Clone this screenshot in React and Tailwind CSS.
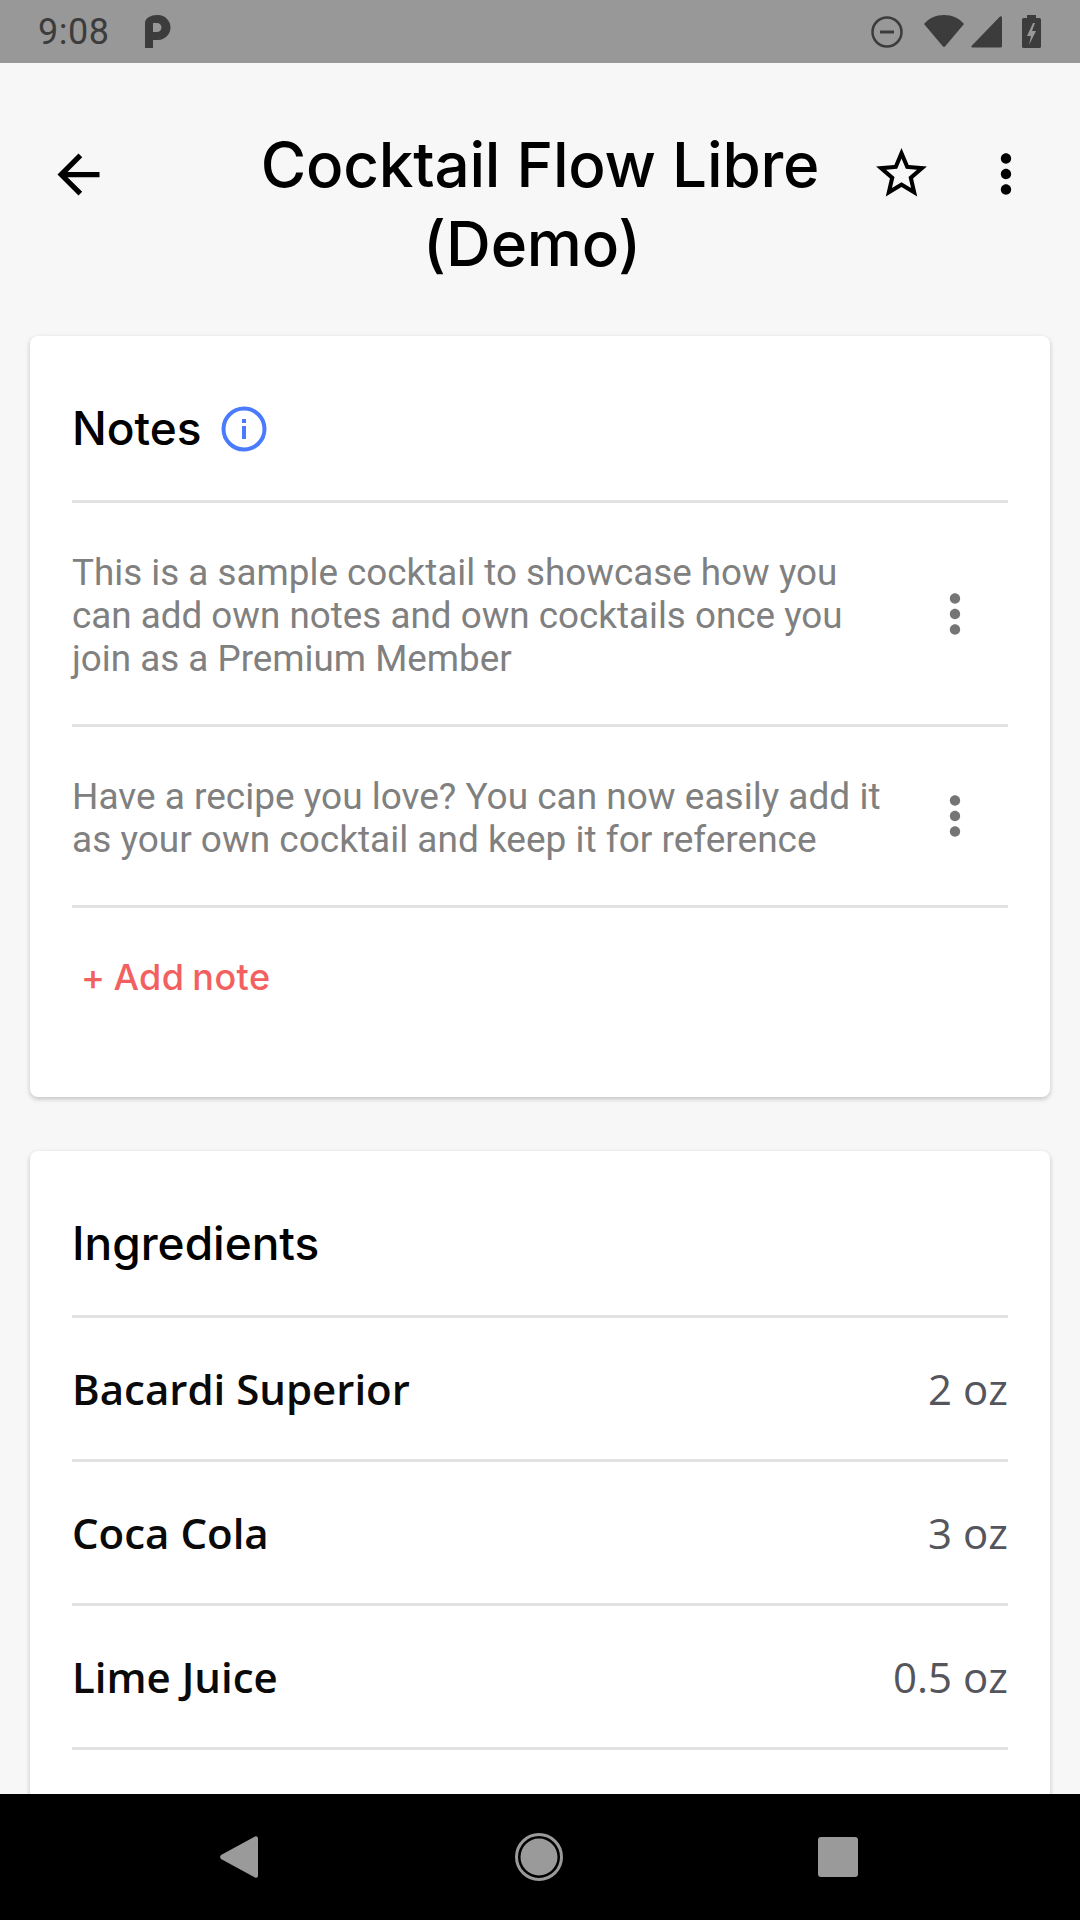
import React from 'react'

const DOTS = 'M12 8c1.1 0 2-.9 2-2s-.9-2-2-2-2 .9-2 2 .9 2 2 2zm0 2c-1.1 0-2 .9-2 2s.9 2 2 2 2-.9 2-2-.9-2-2-2zm0 6c-1.1 0-2 .9-2 2s.9 2 2 2 2-.9 2-2-.9-2-2-2z'

function MoreVert({ fill }) {
  return (
    <svg width="62" height="62" viewBox="0 0 24 24" fill={fill} className="shrink-0">
      <path d={DOTS} />
    </svg>
  )
}

function StatusBar() {
  return (
    <div className="h-[63px] shrink-0 bg-[#989898] flex items-center text-[#3c3c3c]">
      <span className="ml-[38px] pt-[2px] w-[107px] text-[36px] leading-[63px] font-['Roboto',sans-serif] tracking-[0.5px]">9:08</span>
      <svg width="26" height="33" viewBox="0 0 26 33" fill="currentColor">
        <path d="M0 8a12 8 0 0 1 12-8h1a12.500 12.500 0 0 1 0 25H8v8H0zM8 8v9h4a4.500 4.500 0 0 0 0-9z" fillRule="evenodd" />
      </svg>
      <div className="flex-1" />
      <svg width="32" height="32" viewBox="0 0 32 32" fill="none" stroke="currentColor" strokeWidth="2.500">
        <circle cx="16" cy="16" r="14.500" />
        <path d="M9 16h14" strokeWidth="3" />
      </svg>
      <svg className="ml-[20px]" width="42" height="33" viewBox="0 0 42 33" fill="currentColor">
        <path d="M1 9C6 3 13 0 21 0s15 3 20 9L22 31.500a1.500 1.500 0 0 1-2 0z" />
      </svg>
      <svg className="ml-[6px]" width="31" height="32" viewBox="0 0 31 32" fill="currentColor">
        <path d="M29 0.500a1.500 1.500 0 0 1 2 1V30a1.500 1.500 0 0 1-1.500 1.500H1.500a1 1 0 0 1-1-1.500z" />
      </svg>
      <svg className="ml-[20px] mr-[39px]" width="19" height="33" viewBox="0 0 19 33" fill="currentColor">
        <path fillRule="evenodd" d="M5 0h9v3h3.500A1.500 1.500 0 0 1 19 4.500V31.500A1.500 1.500 0 0 1 17.500 33H1.500A1.500 1.500 0 0 1 0 31.500V4.500A1.500 1.500 0 0 1 1.500 3H5zM11 8l-6 13h4l-2 9 7-14h-4l3-8z" />
      </svg>
    </div>
  )
}

function NavBar() {
  return (
    <div className="h-[126px] shrink-0 bg-black flex items-center pl-[220px]">
      <svg width="38" height="42" viewBox="0 0 38 42" fill="#9a9a9a">
        <path d="M35 0.500a2 2 0 0 1 3 1.500V40a2 2 0 0 1-3 1.500L1 23a3 3 0 0 1 0-4z" />
      </svg>
      <svg className="ml-[257px]" width="48" height="48" viewBox="0 0 48 48">
        <circle cx="24" cy="24" r="22.500" fill="none" stroke="#9a9a9a" strokeWidth="3" />
        <circle cx="24" cy="24" r="18.500" fill="#9a9a9a" />
      </svg>
      <div className="ml-[255px] w-[40px] h-[40px] rounded-[3px] bg-[#9a9a9a]" />
    </div>
  )
}

function Note({ lines, pad, size }) {
  return (
    <div className={`flex items-center justify-between border-b-[3px] border-[#e2e2e2] ${pad}`}>
      <p className={`pt-[3px] leading-[43px] text-[#808080] font-['Roboto',sans-serif] whitespace-nowrap ${size}`}>
        {lines.map(l => <span key={l} className="block">{l}</span>)}
      </p>
      <div className="mr-[22px]">
        <MoreVert fill="#757575" />
      </div>
    </div>
  )
}

function Ingredient({ name, amount }) {
  return (
    <div className="h-[144px] flex items-center justify-between border-b-[3px] border-[#e2e2e2] font-['Open_Sans',sans-serif] text-[42px]">
      <span className="font-semibold text-[#0a0a0a]">{name}</span>
      <span className="text-[#55555c]">{amount}</span>
    </div>
  )
}

export default function App() {
  return (
    <div className="w-[1080px] h-[1920px] flex flex-col overflow-hidden bg-[#f7f7f7]">
      <StatusBar />
      <div className="flex-1 min-h-0 overflow-hidden">
        {/* Header */}
        <div className="h-[273px] flex items-start pt-[63px]">
          <svg className="ml-[47px] mt-[17px]" width="63" height="63" viewBox="0 0 24 24" fill="#000">
            <path d="M20 11H7.830l5.590-5.590L12 4l-8 8 8 8 1.410-1.410L7.830 13H20v-2z" />
          </svg>
          <h1 className="w-[720px] ml-[62px] text-center text-[62px] leading-[78px] text-black font-['Inter',sans-serif] font-medium tracking-[-0.2px]">
            <span className="block pl-[16px]">Cocktail Flow Libre</span>
            <span className="block pt-[1px]">(Demo)</span>
          </h1>
          <svg className="ml-[-21px] mt-[17px]" width="61" height="61" viewBox="0 0 24 24" fill="#000">
            <path d="M22 9.240l-7.190-.620L12 2 9.190 8.630 2 9.240l5.460 4.730L5.820 21 12 17.270 18.180 21l-1.630-7.030L22 9.240zM12 15.400l-3.760 2.270 1-4.280-3.320-2.880 4.380-.380L12 6.100l1.710 4.040 4.380.380-3.320 2.880 1 4.280L12 15.400z" />
          </svg>
          <div className="ml-[43px] mt-[17px]">
            <MoreVert fill="#000" />
          </div>
        </div>

        {/* Notes */}
        <div className="mx-[30px] h-[761px] bg-white rounded-[8px] shadow-[0_2px_5px_rgba(0,0,0,0.22)] px-[42px]">
          <div className="h-[167px] pt-[20px] flex items-center gap-[19px] border-b-[3px] border-[#e2e2e2] text-[46px] font-['Inter',sans-serif] font-medium text-black">
            <span>Notes</span>
            <svg className="mt-[2px]" width="46" height="46" viewBox="0 0 46 46" fill="none" stroke="#4a7bff">
              <circle cx="23" cy="23" r="20.500" strokeWidth="4" />
              <path d="M23 20v13" strokeWidth="4" />
              <path d="M23 13v4" strokeWidth="4" />
            </svg>
          </div>
          <Note
            pad="h-[224px]"
            size="text-[36.8px]"
            lines={['This is a sample cocktail to showcase how you', 'can add own notes and own cocktails once you', 'join as a Premium Member']}
          />
          <Note
            pad="h-[181px]"
            size="text-[37px]"
            lines={['Have a recipe you love? You can now easily add it', 'as your own cocktail and keep it for reference']}
          />
          <div className="pt-[47px] pl-[9px] text-[36px] leading-[44px] font-['Inter',sans-serif] font-medium text-[#f26060] tracking-[0.4px] [word-spacing:-2px]">+ Add note</div>
        </div>

        {/* Ingredients */}
        <div className="mx-[30px] mt-[54px] bg-white rounded-[8px] shadow-[0_2px_5px_rgba(0,0,0,0.22)] px-[42px]">
          <div className="h-[167px] pt-[20px] flex items-center border-b-[3px] border-[#e2e2e2] text-[46px] font-['Inter',sans-serif] font-medium text-black">Ingredients</div>
          <Ingredient name="Bacardi Superior" amount="2 oz" />
          <Ingredient name="Coca Cola" amount="3 oz" />
          <Ingredient name="Lime Juice" amount="0.5 oz" />
          <div className="h-[100px]" />
        </div>
      </div>
      <NavBar />
    </div>
  )
}
